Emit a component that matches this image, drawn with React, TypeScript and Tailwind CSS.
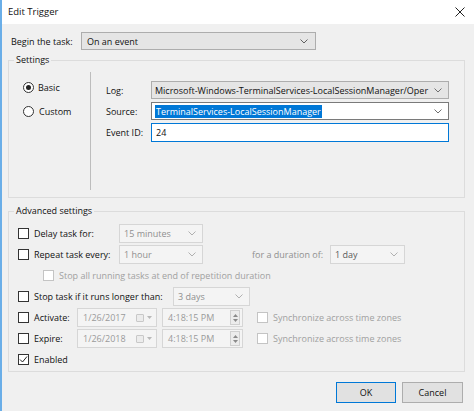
import React from "react";

const Chevron = ({ color = "#606060" }: { color?: string }) => (
  <svg width="8" height="5" viewBox="0 0 8 5" className="shrink-0">
    <polyline points="0.5,0.5 4,4 7.5,0.5" fill="none" stroke={color} strokeWidth="1" />
  </svg>
);

const Check = ({ disabled = false, checked = false }: { disabled?: boolean; checked?: boolean }) => (
  <div
    className={`w-[11px] h-[11px] shrink-0 border bg-white flex items-center justify-center ${
      disabled ? "border-[#c4c4c4]" : "border-[#333333]"
    }`}
  >
    {checked && (
      <svg width="9" height="9" viewBox="0 0 9 9">
        <polyline points="1,4.5 3.5,7 8,1.5" fill="none" stroke="#222" strokeWidth="1" />
      </svg>
    )}
  </div>
);

const Radio = ({ checked = false }: { checked?: boolean }) => (
  <div className="w-[11px] h-[11px] shrink-0 rounded-full border border-[#333333] bg-white flex items-center justify-center">
    {checked && <div className="w-[5px] h-[5px] rounded-full bg-[#222]" />}
  </div>
);

const DisabledCombo = ({ text, w, dark = false }: { text: string; w: string; dark?: boolean }) => (
  <div
    className={`${w} h-[19px] border border-[#d6d6d6] bg-[#f4f4f4] flex items-center justify-between pl-[4px] pr-[6px]`}
  >
    <span className={dark ? "text-[#5a5a5a]" : "text-[#8f8f8f]"}>{text}</span>
    <Chevron color="#b0b0b0" />
  </div>
);

const DateBox = ({ text }: { text: string }) => (
  <div className="w-[80px] h-[19px] border border-[#d6d6d6] bg-[#f4f4f4] flex items-center pl-[5px] pr-[4px]">
    <span className="text-[#9a9a9a] flex-1">{text}</span>
    <div className="w-[8px] h-[8px] border border-[#c8c8c8] rounded-[1px] bg-[#ececec]" />
    <svg width="5" height="3" viewBox="0 0 5 3" className="ml-[3px]">
      <polygon points="0,0 5,0 2.5,3" fill="#b8b8b8" />
    </svg>
  </div>
);

const TimeBox = ({ text }: { text: string }) => (
  <div className="w-[81px] h-[19px] border border-[#d6d6d6] bg-[#f4f4f4] flex items-center pl-[5px] pr-[2px]">
    <span className="text-[#9a9a9a] flex-1">{text}</span>
    <div className="w-[10px] h-[15px] border border-[#d0d0d0] bg-[#ececec] flex flex-col items-center justify-center gap-[2px]">
      <svg width="5" height="3" viewBox="0 0 5 3">
        <polygon points="0,3 5,3 2.5,0" fill="#8a8a8a" />
      </svg>
      <svg width="5" height="3" viewBox="0 0 5 3">
        <polygon points="0,0 5,0 2.5,3" fill="#8a8a8a" />
      </svg>
    </div>
  </div>
);

export default function App() {
  return (
    <div className="w-[474px] h-[411px] bg-[#f0f0f0] border-l-2 border-[#6aaee8] flex flex-col font-['Open_Sans',sans-serif] text-[9px] text-[#111] leading-none overflow-hidden">
      {/* Title bar */}
      <div className="h-[24px] bg-white flex items-center justify-between pl-[6px] pr-[9px] shrink-0">
        <span className="text-[9.5px] text-[#111]">Edit Trigger</span>
        <svg width="10" height="10" viewBox="0 0 10 10">
          <line x1="0.5" y1="0.5" x2="9.5" y2="9.5" stroke="#222" strokeWidth="1" />
          <line x1="9.5" y1="0.5" x2="0.5" y2="9.5" stroke="#222" strokeWidth="1" />
        </svg>
      </div>

      <div className="flex flex-col pl-[6px] pr-[9px]">
        {/* Begin the task */}
        <div className="mt-[8px] h-[18px] flex items-center">
          <span className="pl-[3px] w-[73px]">Begin the task:</span>
          <div className="w-[235px] h-[18px] border border-[#adadad] bg-[#e5e5e5] flex items-center justify-between pl-[5px] pr-[7px]">
            <span>On an event</span>
            <Chevron />
          </div>
        </div>

        {/* Settings */}
        <fieldset className="mt-[3px] border border-[#dcdcdc] pb-[7px]">
          <legend className="ml-[5px] px-[2px] leading-[14px]">Settings</legend>
          <div className="mt-[5px] flex h-[118px]">
            <div className="w-[81px] pl-[14px] flex flex-col">
              <div className="mt-[8px] h-[14px] flex items-center gap-[4px]">
                <Radio checked />
                <span>Basic</span>
              </div>
              <div className="mt-[10px] h-[14px] flex items-center gap-[5px]">
                <Radio />
                <span>Custom</span>
              </div>
            </div>
            <div className="w-px bg-[#bdbdbd]" />
            <div className="flex-1 pl-[15px] flex flex-col gap-[3px] pt-[9px]">
              <div className="h-[18px] flex items-center">
                <span className="w-[45px]">Log:</span>
                <div className="w-[298px] h-[18px] border border-[#adadad] bg-[#e5e5e5] flex items-center justify-between pl-[3px] pr-[6px]">
                  <span className="whitespace-nowrap">
                    Microsoft-Windows-TerminalServices-LocalSessionManager/Oper
                  </span>
                  <Chevron color="#707070" />
                </div>
              </div>
              <div className="h-[18px] flex items-center">
                <span className="w-[45px]">Source:</span>
                <div className="w-[298px] h-[18px] border border-[#7a7a7a] bg-white flex items-center justify-between pl-[3px] pr-[6px]">
                  <span className="bg-[#0078d7] text-white px-[1px] py-[2px]">TerminalServices-LocalSessionManager</span>
                  <Chevron color="#707070" />
                </div>
              </div>
              <div className="h-[19px] flex items-center">
                <span className="w-[45px]">Event ID:</span>
                <div className="w-[298px] h-[19px] border border-[#0078d7] bg-white flex items-center pl-[4px]">
                  <span>24</span>
                </div>
              </div>
            </div>
          </div>
        </fieldset>

        {/* Advanced settings */}
        <fieldset className="mt-[6px] border border-[#dcdcdc] pb-[2px]">
          <legend className="ml-[5px] px-[2px] leading-[14px]">Advanced settings</legend>
          <div className="mt-[6px] flex flex-col gap-[2px] pl-[9px]">
            <div className="h-[19px] flex items-center">
              <Check />
              <span className="ml-[5px] w-[85px]">Delay task for:</span>
              <DisabledCombo text="15 minutes" w="w-[84px]" />
            </div>
            <div className="h-[19px] flex items-center">
              <Check />
              <span className="ml-[5px] w-[85px]">Repeat task every:</span>
              <DisabledCombo text="1 hour" w="w-[84px]" />
              <span className="ml-[49px] w-[78px] text-[#8f8f8f]">for a duration of:</span>
              <DisabledCombo text="1 day" w="w-[75px]" dark />
            </div>
            <div className="h-[19px] flex items-center pl-[25px]">
              <Check disabled />
              <span className="ml-[5px] text-[#a0a0a0]">Stop all running tasks at end of repetition duration</span>
            </div>
            <div className="h-[19px] flex items-center">
              <Check />
              <span className="ml-[5px] w-[139px]">Stop task if it runs longer than:</span>
              <DisabledCombo text="3 days" w="w-[77px]" />
            </div>
            <div className="h-[19px] flex items-center">
              <Check />
              <span className="ml-[5px] w-[43px]">Activate:</span>
              <DateBox text="1/26/2017" />
              <div className="ml-[5px]">
                <TimeBox text="4:18:15 PM" />
              </div>
              <div className="ml-[14px]">
                <Check disabled />
              </div>
              <span className="ml-[5px] text-[#a0a0a0]">Synchronize across time zones</span>
            </div>
            <div className="h-[19px] flex items-center">
              <Check />
              <span className="ml-[5px] w-[43px]">Expire:</span>
              <DateBox text="1/26/2018" />
              <div className="ml-[5px]">
                <TimeBox text="4:18:15 PM" />
              </div>
              <div className="ml-[14px]">
                <Check disabled />
              </div>
              <span className="ml-[5px] text-[#a0a0a0]">Synchronize across time zones</span>
            </div>
            <div className="h-[19px] flex items-center">
              <Check checked />
              <span className="ml-[5px]">Enabled</span>
            </div>
          </div>
        </fieldset>

        {/* Buttons */}
        <div className="mt-[10px] flex justify-end gap-[6px] pr-[2px]">
          <button className="w-[60px] h-[21px] border border-[#0078d7] bg-[#e1e1e1] text-[#111] text-[9px] flex items-center justify-center">
            OK
          </button>
          <button className="w-[61px] h-[21px] border border-[#adadad] bg-[#e1e1e1] text-[#111] text-[9px] flex items-center justify-center">
            Cancel
          </button>
        </div>
      </div>
    </div>
  );
}
